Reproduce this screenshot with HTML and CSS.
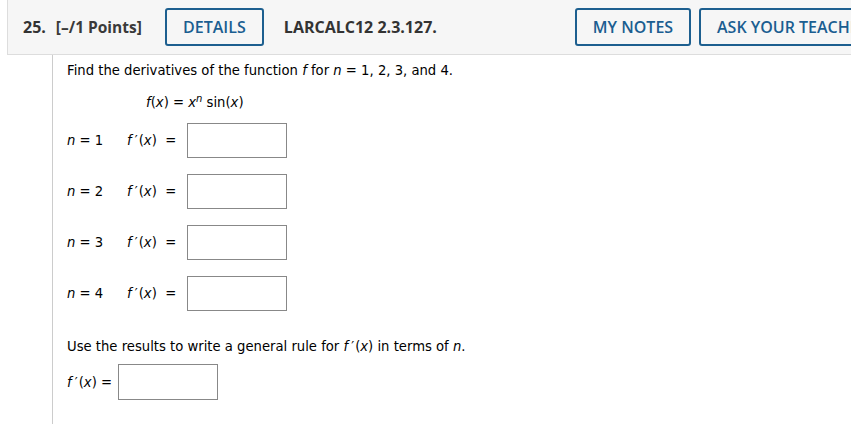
FILE: index.html
```html
<!DOCTYPE html>
<html>
<head>
<meta charset="utf-8">
<link rel="stylesheet" href="styles.css">
</head>
<body>
<div class="header">
  <span class="qnum">25.</span>
  <span class="points">[–/1 Points]</span>
  <span class="btn details">DETAILS</span>
  <span class="code">LARCALC12 2.3.127.</span>
  <span class="spacer"></span>
  <span class="btn notes">MY NOTES</span>
  <span class="btn ask">ASK YOUR TEACHER</span>
</div>
<div class="body">
  <div class="content">
    <p class="intro">Find the derivatives of the function <i>f</i> for <i>n</i> = 1, 2, 3, and 4.</p>
    <p class="formula"><i>f</i>(<i>x</i>) = <i>x</i><sup><i>n</i></sup> sin(<i>x</i>)</p>
    <div class="rows">
      <div class="row"><span class="nlabel"><i>n</i> = 1</span><span class="flabel"><i>f</i><span class="pr">′</span>(<i>x</i>)&nbsp; =</span><span class="box"></span></div>
      <div class="row"><span class="nlabel"><i>n</i> = 2</span><span class="flabel"><i>f</i><span class="pr">′</span>(<i>x</i>)&nbsp; =</span><span class="box"></span></div>
      <div class="row"><span class="nlabel"><i>n</i> = 3</span><span class="flabel"><i>f</i><span class="pr">′</span>(<i>x</i>)&nbsp; =</span><span class="box"></span></div>
      <div class="row"><span class="nlabel"><i>n</i> = 4</span><span class="flabel"><i>f</i><span class="pr">′</span>(<i>x</i>)&nbsp; =</span><span class="box"></span></div>
    </div>
    <p class="rule">Use the results to write a general rule for <i>f</i><span class="pr">′</span>(<i>x</i>) in terms of <i>n</i>.</p>
    <div class="final"><span class="flabel2"><i>f</i><span class="pr">′</span>(<i>x</i>) =</span><span class="box tall"></span></div>
  </div>
</div>
</body>
</html>
```
FILE: styles.css
```css
html, body {
  margin: 0;
  padding: 0;
  background: #fff;
  overflow: hidden;
}
.header {
  margin-left: 7px;
  height: 54px;
  border-left: 1px solid #ddd;
  border-bottom: 1px solid #ddd;
  background: #f6f6f6;
  display: flex;
  align-items: center;
  padding-left: 15px;
  font-family: "Open Sans", sans-serif;
  font-weight: 600;
  font-size: 16px;
  color: #333;
  white-space: nowrap;
  overflow: hidden;
}
.qnum { margin-right: 10px; font-weight: 700; }
.points { width: 88px; margin-right: 21px; color: #3a3a3a; font-size: 15.5px; font-weight: 700; }
.btn {
  box-sizing: border-box;
  height: 38px;
  border: 2px solid #1d5f8f;
  border-radius: 3px;
  color: #1b5e91;
  font-weight: 600;
  display: inline-flex;
  align-items: center;
  justify-content: center;
  padding: 0 10px;
  flex: none;
}
.details { width: 99px; margin-right: 20px; }
.code { color: #333; font-weight: 700; }
.spacer { flex: 1; }
.notes { width: 116px; margin-right: 8px; }
.ask { width: 170px; margin-right: -18px; justify-content: flex-start; padding-left: 16px; }
.body {
  margin-left: 52px;
  border-left: 1px solid #ccc;
  height: 369px;
}
.content {
  padding-left: 14px;
  font-family: "DejaVu Sans", Verdana, sans-serif;
  font-size: 13.2px;
  color: #000;
}
.content p { margin: 0; }
.pr { margin-left: 3px; margin-right: 1px; }
.intro { padding-top: 8px; line-height: 16px; }
.formula { padding-top: 16px; padding-left: 79px; line-height: 16px; }
sup { font-size: 10px; line-height: 0; vertical-align: 5px; }
.rows { padding-top: 12px; }
.row {
  display: flex;
  align-items: center;
  height: 35px;
  margin-bottom: 16px;
}
.nlabel { width: 60px; }
.flabel { width: 60px; }
.box {
  box-sizing: border-box;
  width: 100px;
  height: 35px;
  border: 1px solid #888;
  background: #fff;
}
.box.tall { height: 36px; }
.rule { padding-top: 12px; line-height: 16px; }
.final {
  display: flex;
  align-items: center;
  margin-top: 9px;
}
.flabel2 { width: 51px; }
```
